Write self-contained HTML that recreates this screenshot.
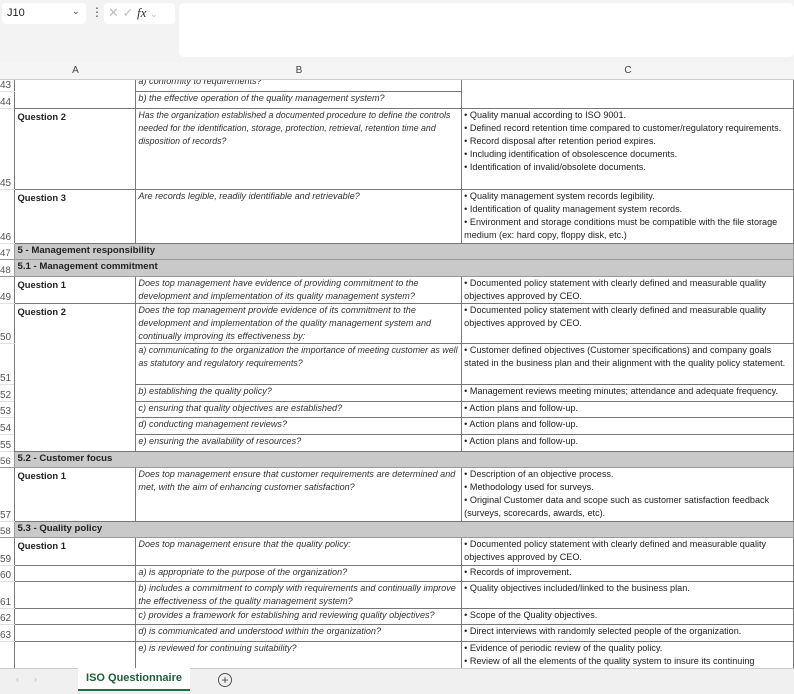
<!DOCTYPE html>
<html><head><style>
*{margin:0;padding:0;box-sizing:border-box}
body{width:794px;height:694px;overflow:hidden;background:#fff;font-family:"Liberation Sans",sans-serif;position:relative}
.top{position:absolute;left:0;top:0;width:794px;height:62px;background:#f3f3f3}
.nb{position:absolute;left:2px;top:3px;width:84px;height:21px;background:#fff;border-radius:4px;font-size:11px;padding:4px 5px;color:#222}
.nb span{position:absolute;right:6px;top:3px;color:#555;font-size:10px}
.fxb{position:absolute;left:104px;top:3px;width:71px;height:21px;background:#fff;border-radius:4px;color:#bbb;font-size:13px;padding:2px 4px}
.fb{position:absolute;left:179px;top:3px;width:615px;height:54px;background:#fff;border-radius:5px}
.hdr{position:absolute;left:0;top:62px;width:794px;height:18px;background:#f5f5f5;border-bottom:1px solid #ccc;z-index:2;font-size:10px;color:#444}
.hdr div{position:absolute;top:3px;text-align:center}
table{position:absolute;left:0;top:74px;border-collapse:collapse;table-layout:fixed;font-size:9.1px;color:#222}
td{border:1px solid #777;vertical-align:top;padding:0 2px;line-height:13px;overflow:hidden}
td.n{border:none;border-bottom:1px solid #e0e0e0;color:#555;font-size:10px;font-weight:normal;vertical-align:bottom;padding:0;background:#fff;line-height:11px}
td.b{font-style:italic;color:#333}
td.q{font-weight:bold;font-size:9.4px;padding-top:1px}
tr.s td{background:#c9c9c9;font-weight:bold;font-size:9.6px;border-color:#999;line-height:14px}
tr.s td.n{background:#fff;font-weight:normal;line-height:11px}
.tabs{position:absolute;left:0;top:668px;width:794px;height:26px;background:#f0f0f0;border-top:1px solid #ccc;z-index:3}
.tab{position:absolute;left:78px;top:-1px;width:112px;height:23px;background:#fff;border-bottom:2px solid #1e7145;color:#1e5e3a;font-weight:bold;font-size:11px;text-align:center;line-height:21px}
</style></head><body>
<div class="top">
<div class="nb">J10<span>⌄</span></div>
<div style="position:absolute;left:91px;top:5px;color:#444;font-size:12px">⋮</div>
<div class="fxb">✕ ✓ <i style="color:#333;font-family:'Liberation Serif',serif">fx</i> <span style="font-size:9px">⌄</span></div>
<div class="fb"></div>
</div>
<div class="hdr"><div style="left:15px;width:121px">A</div><div style="left:136px;width:326px">B</div><div style="left:462px;width:332px">C</div></div>
<table>
<colgroup><col style="width:15px"><col style="width:121px"><col style="width:326px"><col style="width:332px"></colgroup>
<tr style="height:17px"><td class="n">43</td><td rowspan="2"></td><td class="b">a) conformity to requirements?</td><td rowspan="2"></td></tr>
<tr style="height:17px"><td class="n">44</td><td class="b">b) the effective operation of the quality management system?</td></tr>
<tr style="height:81px"><td class="n">45</td><td class="q">Question 2</td><td class="b" style="font-size:8.8px">Has the organization established a documented procedure to define the controls<br>needed for the identification, storage, protection, retrieval, retention time and<br>disposition of records?</td><td>• Quality manual according to ISO 9001.<br>• Defined record retention time compared to customer/regulatory requirements.<br>• Record disposal after retention period expires.<br>• Including identification of obsolescence documents.<br>• Identification of invalid/obsolete documents.</td></tr>
<tr style="height:54px"><td class="n">46</td><td class="q">Question 3</td><td class="b">Are records legible, readily identifiable and retrievable?</td><td>• Quality management system records legibility.<br>• Identification of quality management system records.<br>• Environment and storage conditions must be compatible with the file storage<br>medium (ex: hard copy, floppy disk, etc.)</td></tr>
<tr class="s" style="height:16px"><td class="n">47</td><td colspan="3">5 - Management responsibility</td></tr>
<tr class="s" style="height:17px"><td class="n">48</td><td colspan="3">5.1 - Management commitment</td></tr>
<tr style="height:26px"><td class="n">49</td><td class="q">Question 1</td><td class="b">Does top management have evidence of providing commitment to the<br>development and implementation of its quality management system?</td><td>• Documented policy statement with clearly defined and measurable quality objectives approved by CEO.</td></tr>
<tr style="height:40px"><td class="n">50</td><td class="q" rowspan="6">Question 2</td><td class="b">Does the top management provide evidence of its commitment to the<br>development and implementation of the quality management system and<br>continually improving its effectiveness by:</td><td>• Documented policy statement with clearly defined and measurable quality objectives approved by CEO.</td></tr>
<tr style="height:41px"><td class="n">51</td><td class="b" style="font-size:8.9px">a) communicating to the organization the importance of meeting customer as well<br>as statutory and regulatory requirements?</td><td>• Customer defined objectives (Customer specifications) and company goals stated in the business plan and their alignment with the quality policy statement.</td></tr>
<tr style="height:17px"><td class="n">52</td><td class="b">b) establishing the quality policy?</td><td>• Management reviews meeting minutes; attendance and adequate frequency.</td></tr>
<tr style="height:16px"><td class="n">53</td><td class="b">c) ensuring that quality objectives are established?</td><td>• Action plans and follow-up.</td></tr>
<tr style="height:17px"><td class="n">54</td><td class="b">d) conducting management reviews?</td><td>• Action plans and follow-up.</td></tr>
<tr style="height:17px"><td class="n">55</td><td class="b">e) ensuring the availability of resources?</td><td>• Action plans and follow-up.</td></tr>
<tr class="s" style="height:16px"><td class="n">56</td><td colspan="3">5.2 - Customer focus</td></tr>
<tr style="height:54px"><td class="n">57</td><td class="q">Question 1</td><td class="b">Does top management ensure that customer requirements are determined and<br>met, with the aim of enhancing customer satisfaction?</td><td>• Description of an objective process.<br>• Methodology used for surveys.<br>• Original Customer data and scope such as customer satisfaction feedback<br>(surveys, scorecards, awards, etc).</td></tr>
<tr class="s" style="height:16px"><td class="n">58</td><td colspan="3">5.3 - Quality policy</td></tr>
<tr style="height:28px"><td class="n">59</td><td class="q">Question 1</td><td class="b">Does top management ensure that the quality policy:</td><td>• Documented policy statement with clearly defined and measurable quality objectives approved by CEO.</td></tr>
<tr style="height:16px"><td class="n">60</td><td></td><td class="b">a) is appropriate to the purpose of the organization?</td><td>• Records of improvement.</td></tr>
<tr style="height:27px"><td class="n">61</td><td></td><td class="b">b) includes a commitment to comply with requirements and continually improve<br>the effectiveness of the quality management system?</td><td>• Quality objectives included/linked to the business plan.</td></tr>
<tr style="height:16px"><td class="n">62</td><td></td><td class="b">c) provides a framework for establishing and reviewing quality objectives?</td><td>• Scope of the Quality objectives.</td></tr>
<tr style="height:17px"><td class="n">63</td><td></td><td class="b">d) is communicated and understood within the organization?</td><td>• Direct interviews with randomly selected people of the organization.</td></tr>
<tr style="height:40px"><td class="n"></td><td></td><td class="b">e) is reviewed for continuing suitability?</td><td>• Evidence of periodic review of the quality policy.<br>• Review of all the elements of the quality system to insure its continuing</td></tr>
</table>
<div class="tabs">
<div style="position:absolute;left:16px;top:5px;color:#bbb;font-size:9px">‹&nbsp;&nbsp;&nbsp;&nbsp;&nbsp;&nbsp;›</div>
<div class="tab">ISO Questionnaire</div>
<div style="position:absolute;left:218px;top:4px;width:14px;height:14px;border:1px solid #555;border-radius:50%;text-align:center;line-height:12px;font-size:12px;color:#444">+</div>
</div>
</body></html>
